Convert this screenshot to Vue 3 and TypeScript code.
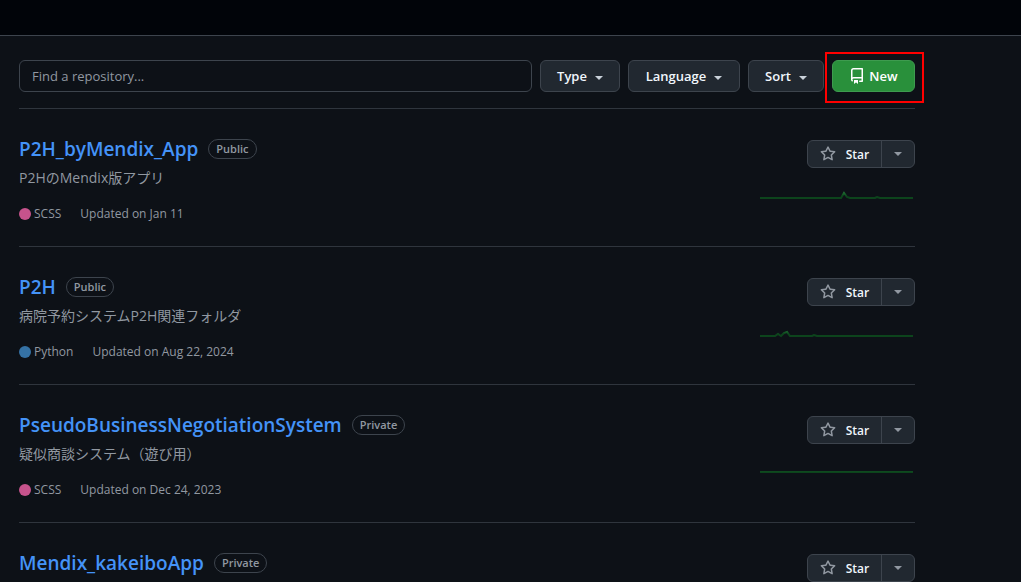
<script setup lang="ts">
interface Repo {
  name: string
  visibility: 'Public' | 'Private'
  description?: string
  language?: string
  updated?: string
  activity?: string
}

const filters: { label: string; size: string }[] = [
  { label: 'Type', size: 'type' },
  { label: 'Language', size: 'language' },
  { label: 'Sort', size: 'sort' },
]

const repos: Repo[] = [
  {
    name: 'P2H_byMendix_App',
    visibility: 'Public',
    description: 'P2HのMendix版アプリ',
    language: 'SCSS',
    updated: 'Jan 11',
    activity: '0,8 81,8 84,3 87,7 90,8 115,8 117,7 120,8 153,8',
  },
  {
    name: 'P2H',
    visibility: 'Public',
    description: '病院予約システムP2H関連フォルダ',
    language: 'Python',
    updated: 'Aug 22, 2024',
    activity: '0,8 15,8 18,6 21,8 24,5 27,4 30,8 52,8 54,7 57,8 153,8',
  },
  {
    name: 'PseudoBusinessNegotiationSystem',
    visibility: 'Private',
    description: '疑似商談システム（遊び用）',
    language: 'SCSS',
    updated: 'Dec 24, 2023',
    activity: '0,6 153,6',
  },
  { name: 'Mendix_kakeiboApp', visibility: 'Private' },
]
</script>

<template>
  <div class="page">
    <header class="topbar"></header>
    <main class="content">
      <form class="toolbar" @submit.prevent>
        <input class="search" type="search" placeholder="Find a repository..." aria-label="Find a repository" />
        <button v-for="f in filters" :key="f.label" type="button" class="btn" :class="f.size">
          {{ f.label }}<span class="caret"></span>
        </button>
        <div class="new-wrap">
          <button type="button" class="btn new">
            <svg width="16" height="16" viewBox="0 0 16 16" fill="currentColor" aria-hidden="true">
              <path d="M2 2.5A2.5 2.5 0 0 1 4.5 0h8.75a.75.75 0 0 1 .75.75v12.5a.75.75 0 0 1-.75.75h-2.5a.75.75 0 0 1 0-1.5h1.75v-2h-8a1 1 0 0 0-.714 1.7.75.75 0 1 1-1.072 1.05A2.495 2.495 0 0 1 2 11.5Zm10.5-1h-8a1 1 0 0 0-1 1v6.708A2.486 2.486 0 0 1 4.5 9h8ZM5 12.25a.25.25 0 0 1 .25-.25h3.5a.25.25 0 0 1 .25.25v3.25a.25.25 0 0 1-.4.2l-1.45-1.087a.249.249 0 0 0-.3 0L5.4 15.7a.25.25 0 0 1-.4-.2Z" />
            </svg>
            New
          </button>
          <span class="highlight"></span>
        </div>
      </form>

      <ul class="list">
        <li v-for="r in repos" :key="r.name" class="repo">
          <div class="info">
            <div class="heading">
              <h3 class="name"><a href="#">{{ r.name }}</a></h3>
              <span class="label">{{ r.visibility }}</span>
            </div>
            <p v-if="r.description" class="desc">{{ r.description }}</p>
            <div v-if="r.language" class="meta">
              <span class="lang"><i class="dot" :class="r.language.toLowerCase()"></i>{{ r.language }}</span>
              <span>Updated on {{ r.updated }}</span>
            </div>
          </div>
          <div class="side">
            <div class="star-group">
              <button type="button" class="star">
                <svg width="16" height="16" viewBox="0 0 16 16" fill="currentColor" aria-hidden="true">
                  <path d="M8 .25a.75.75 0 0 1 .673.418l1.882 3.815 4.21.612a.75.75 0 0 1 .416 1.279l-3.046 2.97.719 4.192a.751.751 0 0 1-1.088.791L8 12.347l-3.766 1.98a.75.75 0 0 1-1.088-.79l.72-4.194L.818 6.374a.75.75 0 0 1 .416-1.28l4.21-.611L7.327.668A.75.75 0 0 1 8 .25Zm0 2.445L6.615 5.5a.75.75 0 0 1-.564.41l-3.097.45 2.24 2.184a.75.75 0 0 1 .216.664l-.528 3.084 2.769-1.456a.75.75 0 0 1 .698 0l2.77 1.456-.53-3.084a.75.75 0 0 1 .216-.664l2.24-2.183-3.096-.45a.75.75 0 0 1-.564-.41L8 2.694Z" />
                </svg>
                Star
              </button>
              <button type="button" class="more" aria-label="Add this repository to a list"><span class="caret"></span></button>
            </div>
            <svg v-if="r.activity" class="spark" width="155" height="12" viewBox="0 0 155 12" aria-hidden="true">
              <defs>
                <linearGradient :id="'g-' + r.name" gradientUnits="userSpaceOnUse" x1="0" y1="6" x2="0" y2="1">
                  <stop offset="0" stop-color="#0c441c" />
                  <stop offset="1" stop-color="#26813b" />
                </linearGradient>
              </defs>
              <polyline :points="r.activity" fill="none" :stroke="`url(#g-${r.name}) #0c441c`" stroke-width="2" />
            </svg>
          </div>
        </li>
      </ul>
    </main>
  </div>
</template>

<style>
body {
  margin: 0;
  background: #0d1117;
}
</style>

<style scoped>
* {
  box-sizing: border-box;
}
.page {
  height: 100vh;
  overflow: hidden;
  background: #0d1117;
  color: #f0f6fc;
  font-family: "Open Sans", "Noto Sans CJK JP", sans-serif;
  font-size: 13px;
}
.topbar {
  height: 36px;
  background: #010409;
  border-bottom: 1px solid #3d444d;
}
.content {
  padding: 24px 106px 0 19px;
}
.toolbar {
  display: flex;
  gap: 8px;
  padding-bottom: 16px;
  border-bottom: 1px solid #2f353d;
}
.search {
  flex: 1;
  min-width: 0;
  height: 32px;
  padding: 0 12px;
  border: 1px solid #3d444d;
  border-radius: 6px;
  background: #0d1117;
  color: #f0f6fc;
  font: inherit;
  appearance: none;
}
.search::placeholder {
  color: #9198a1;
  opacity: 1;
}
.btn {
  display: flex;
  align-items: center;
  justify-content: center;
  gap: 8px;
  height: 32px;
  padding: 0;
  border: 1px solid #3d444d;
  border-radius: 6px;
  background: #212830;
  color: #f0f6fc;
  font: inherit;
  font-weight: 600;
}
.type {
  width: 80px;
}
.language {
  width: 112px;
}
.sort {
  width: 76px;
}
.caret {
  width: 0;
  border: 4px solid transparent;
  border-top-color: currentColor;
  border-bottom: 0;
}
.btn .caret {
  margin-top: 3px;
  border-top-color: #c9d1d9;
}
.new-wrap {
  position: relative;
}
.new {
  width: 83px;
  gap: 4px;
  background: #29903b;
  border-color: #3e9b4f;
  color: #fff;
}
.highlight {
  position: absolute;
  inset: -8px -9px -11px -7px;
  border: 2px solid #f00;
  pointer-events: none;
}
.list {
  margin: 0;
  padding: 0;
  list-style: none;
}
.repo {
  display: flex;
  justify-content: space-between;
  min-height: 138px;
  padding: 24px 0 20px;
  border-bottom: 1px solid #2f353d;
}
.heading {
  display: flex;
  align-items: center;
  gap: 10px;
  height: 32px;
}
.name {
  margin: 0;
  font-size: 19px;
  line-height: 30px;
  font-weight: 600;
}
.name a {
  color: #4493f8;
  text-decoration: none;
}
.label {
  height: 20px;
  padding: 0 7px;
  border: 1px solid #3d444d;
  border-radius: 10px;
  color: #9198a1;
  font-size: 11px;
  line-height: 18px;
  font-weight: 600;
}
.desc {
  margin: 3px 0 0;
  color: #9198a1;
  font-size: 14px;
  line-height: 20px;
}
.meta {
  display: flex;
  gap: 19px;
  margin-top: 17px;
  color: #9198a1;
  font-size: 12px;
  line-height: 18px;
}
.lang {
  display: flex;
  align-items: center;
  gap: 3px;
}
.dot {
  width: 12px;
  height: 12px;
  border-radius: 50%;
}
.scss {
  background: #c6538c;
}
.python {
  background: #3572a5;
}
.side {
  display: flex;
  flex-direction: column;
  align-items: flex-end;
  padding-top: 7px;
}
.star-group {
  display: flex;
  height: 28px;
  border: 1px solid #3d444d;
  border-radius: 6px;
  background: #212830;
}
.star,
.more {
  display: flex;
  align-items: center;
  padding: 0;
  border: 0;
  background: none;
  color: #f0f6fc;
  font: inherit;
  font-size: 12px;
  font-weight: 600;
}
.star {
  width: 73px;
  justify-content: center;
  gap: 10px;
}
.star svg {
  color: #9198a1;
}
.more {
  width: 33px;
  justify-content: center;
  border-left: 1px solid #3d444d;
  color: #9198a1;
}
.spark {
  margin-top: 22px;
}
</style>
